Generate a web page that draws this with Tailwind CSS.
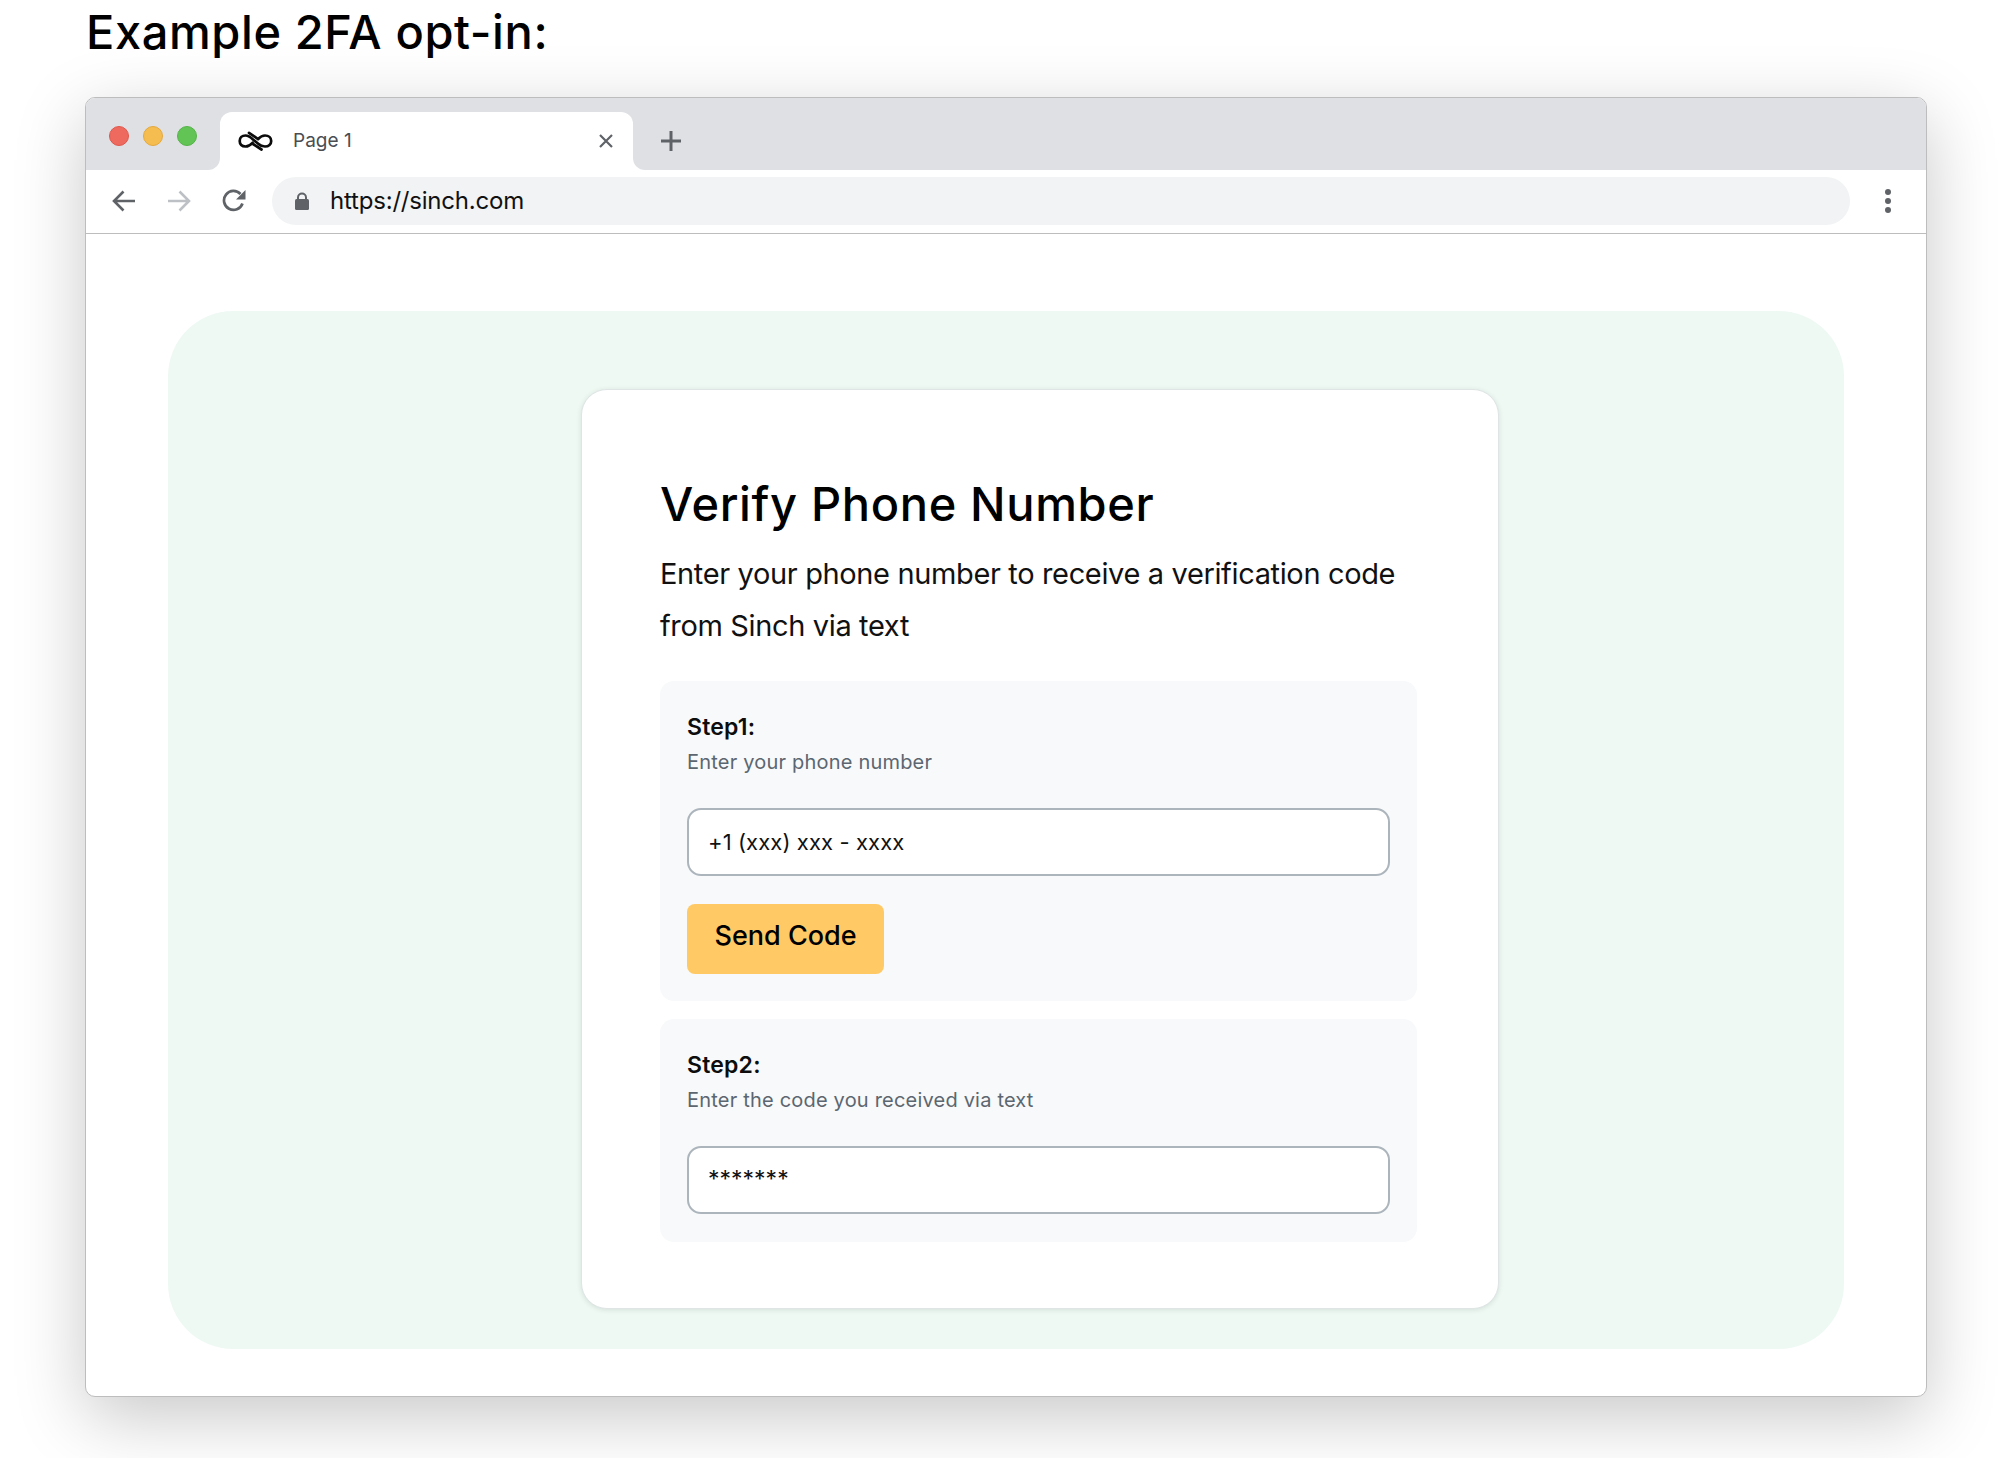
<!DOCTYPE html>
<html lang="en">
<head>
<meta charset="utf-8">
<title>Example 2FA opt-in</title>
<script src="https://cdn.jsdelivr.net/npm/@tailwindcss/browser@4"></script>
</head>
<body class="bg-white">
<div class="w-[2012px] h-[1458px] overflow-hidden bg-white font-['Inter','Liberation_Sans',sans-serif] text-black pl-[85px]">
  <h1 class="h-[97px] pt-[5px] pl-[1px] text-[47px] leading-[54px] font-[550] tracking-[0.6px]">Example 2FA opt-in:</h1>
  <div class="w-[1842px] h-[1300px] flex flex-col rounded-[10px] border border-[#bdbdbd] bg-white shadow-[0_20px_70px_rgba(0,0,0,0.22)] overflow-hidden">
    <div class="h-[72px] shrink-0 flex items-start bg-[#dfe0e4]">
      <div class="flex items-center gap-[14px] pl-[23px] pt-[28px] w-[134px]">
        <span class="w-[20px] h-[20px] rounded-full bg-[#ee6a5f] border border-[#e0574c]"></span>
        <span class="w-[20px] h-[20px] rounded-full bg-[#f5bd4f] border border-[#e4a83c]"></span>
        <span class="w-[20px] h-[20px] rounded-full bg-[#61c454] border border-[#55b348]"></span>
      </div>
      <div class="relative mt-[14px] w-[413px] h-[58px] flex items-center bg-white rounded-t-[12px]">
        <span class="absolute -left-[12px] bottom-0 w-[12px] h-[12px] bg-white"><span class="block w-full h-full bg-[#dfe0e4] rounded-br-[12px]"></span></span>
        <span class="absolute -right-[12px] bottom-0 w-[12px] h-[12px] bg-white"><span class="block w-full h-full bg-[#dfe0e4] rounded-bl-[12px]"></span></span>
        <svg class="ml-[18px] shrink-0" width="35" height="20" viewBox="0 0 35 20" fill="none" stroke="#0b0b0b" stroke-width="2.7" stroke-linecap="round" stroke-linejoin="round">
          <path d="M14.5 11.8C12.5 14 10.5 15.5 7.5 15.5C3.8 15.5 1.7 13.3 1.7 10C1.7 6.7 4 4.5 7.5 4.5C11 4.5 13 6.5 15 8.5L20.5 13C22.5 15 24.5 15.5 27 15.5C30.7 15.5 33.2 13.3 33.2 10C33.2 6.7 30.7 4.5 27 4.5C24 4.5 22 6 20 8"/>
          <path d="M11 1.8L20 8M15 13L23.5 18.5"/>
        </svg>
        <span class="ml-[20px] text-[19px] leading-[24px] text-[#4a4d52]">Page 1</span>
        <svg class="ml-auto mr-[19px] shrink-0" width="16" height="16" viewBox="0 0 16 16" fill="none" stroke="#5f6368" stroke-width="2.2"><path d="M2 2L14 14M14 2L2 14"/></svg>
      </div>
      <svg class="ml-[27px] mt-[32px] shrink-0" width="22" height="22" viewBox="0 0 22 22" fill="none" stroke="#5f6368" stroke-width="3"><path d="M11 1V21M1 11H21"/></svg>
    </div>
    <div class="h-[64px] shrink-0 flex items-center border-b border-[#bdbdbd] pb-[1px]">
      <svg class="ml-[26px] shrink-0" width="24" height="22" viewBox="0 0 24 22" fill="none" stroke="#5f6368" stroke-width="2.6"><path d="M23 11H2M11.5 1.5L2 11L11.5 20.5"/></svg>
      <svg class="ml-[31px] shrink-0" width="24" height="22" viewBox="0 0 24 22" fill="none" stroke="#bdc1c6" stroke-width="2.6"><path d="M1 11H22M12.5 1.5L22 11L12.5 20.5"/></svg>
      <svg class="ml-[31px] shrink-0" width="24" height="24" viewBox="0 0 24 24" fill="none"><path d="M20.5 14.5A9.5 9.5 0 1 1 18.5 5" stroke="#5f6368" stroke-width="2.7"/><path d="M23.5 1V10.5H14Z" fill="#5f6368"/></svg>
      <div class="ml-[26px] w-[1578px] h-[48px] flex items-center rounded-full bg-[#f1f3f4]">
        <svg class="ml-[23px] shrink-0" width="14" height="18" viewBox="0 0 14 18"><path d="M3 8V5.5A4 4 0 0 1 11 5.5V8" fill="none" stroke="#5f6368" stroke-width="2"/><rect x="0" y="7" width="14" height="11" rx="1.5" fill="#5f6368"/></svg>
        <span class="ml-[21px] text-[24px] leading-[30px] text-[#111] tracking-[-0.2px]">https://sinch.com</span>
      </div>
      <div class="ml-[35px] flex flex-col gap-[3px]">
        <span class="w-[6px] h-[6px] rounded-full bg-[#5f6368]"></span>
        <span class="w-[6px] h-[6px] rounded-full bg-[#5f6368]"></span>
        <span class="w-[6px] h-[6px] rounded-full bg-[#5f6368]"></span>
      </div>
    </div>
    <div class="flex-1 px-[82px] pt-[77px] pb-[47px]">
      <div class="h-full rounded-[65px] bg-[#eff9f4] pl-[413px] pt-[78px] pb-[40px]">
        <div class="w-[918px] h-full rounded-[26px] border border-[#dfe5e5] bg-white shadow-[0_1px_5px_rgba(0,40,30,0.12)] pl-[78px] pr-[81px] pt-[84px]">
          <h2 class="text-[47px] leading-[60px] font-[450] text-black tracking-[0.65px]">Verify Phone Number</h2>
          <p class="mt-[14px] text-[29px] leading-[52px] text-[#111] tracking-[-0.36px]">Enter your phone number to receive a verification code from Sinch via text</p>
          <div class="mt-[29px] h-[320px] rounded-[14px] bg-[#f7f9fa] px-[27px] pt-[29px]">
            <h3 class="text-[23px] leading-[34px] font-semibold text-[#0d0d0d] tracking-[0.2px]">Step1:</h3>
            <p class="mt-[2px] text-[20px] leading-[32px] text-[#5c6670] tracking-[0.2px]">Enter your phone number</p>
            <div class="mt-[30px] h-[68px] flex items-center rounded-[14px] border-2 border-[#adb5bc] bg-white pl-[19px] text-[22px] text-[#111] tracking-[0.1px]">+1 (xxx) xxx - xxxx</div>
            <div class="mt-[28px] w-[197px] h-[70px] flex items-start justify-center rounded-[8px] bg-[#ffc966] pt-[12px] text-[27px] leading-[40px] font-medium text-black">Send Code</div>
          </div>
          <div class="mt-[18px] h-[223px] rounded-[14px] bg-[#f7f9fa] px-[27px] pt-[29px]">
            <h3 class="text-[23px] leading-[34px] font-semibold text-[#0d0d0d] tracking-[0.2px]">Step2:</h3>
            <p class="mt-[2px] text-[20px] leading-[32px] text-[#5c6670] tracking-[0.2px]">Enter the code you received via text</p>
            <div class="mt-[30px] h-[68px] flex items-start rounded-[14px] border-2 border-[#adb5bc] bg-white pl-[19px] pt-[15px] text-[23px] leading-[32px] text-[#111]">*******</div>
          </div>
        </div>
      </div>
    </div>
  </div>
</div>
</body>
</html>
